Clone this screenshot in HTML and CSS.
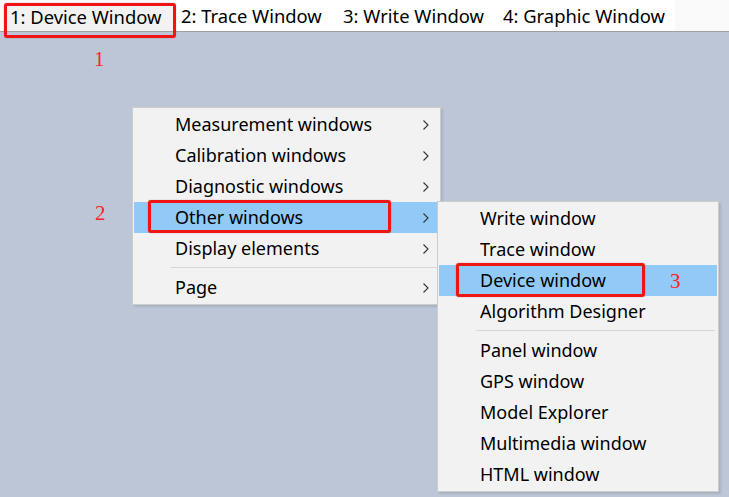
FILE: index.html
```html
<!DOCTYPE html>
<html>
<head>
<meta charset="utf-8">
<link rel="stylesheet" href="styles.css">
</head>
<body>
<div class="tabbar">
  <div class="tab t1 active">1: Device Window</div>
  <div class="tab t2">2: Trace Window</div>
  <div class="tab t3">3: Write Window</div>
  <div class="tab t4">4: Graphic Window</div>
</div>
<div class="desk">
  <div class="mark mark-tab"></div>
  <div class="num num1">1</div>

  <div class="menu menu-main">
    <div class="item">Measurement windows<span class="arrow"><svg width="6" height="10" viewBox="0 0 6 10"><polyline points="0.5,0.5 5,5 0.5,9.5" fill="none" stroke="#333" stroke-width="1.1"/></svg></span></div>
    <div class="item">Calibration windows<span class="arrow"><svg width="6" height="10" viewBox="0 0 6 10"><polyline points="0.5,0.5 5,5 0.5,9.5" fill="none" stroke="#333" stroke-width="1.1"/></svg></span></div>
    <div class="item">Diagnostic windows<span class="arrow"><svg width="6" height="10" viewBox="0 0 6 10"><polyline points="0.5,0.5 5,5 0.5,9.5" fill="none" stroke="#333" stroke-width="1.1"/></svg></span></div>
    <div class="item hl">Other windows<span class="arrow"><svg width="6" height="10" viewBox="0 0 6 10"><polyline points="0.5,0.5 5,5 0.5,9.5" fill="none" stroke="#333" stroke-width="1.1"/></svg></span></div>
    <div class="item">Display elements<span class="arrow"><svg width="6" height="10" viewBox="0 0 6 10"><polyline points="0.5,0.5 5,5 0.5,9.5" fill="none" stroke="#333" stroke-width="1.1"/></svg></span></div>
    <div class="sep"></div>
    <div class="item">Page<span class="arrow"><svg width="6" height="10" viewBox="0 0 6 10"><polyline points="0.5,0.5 5,5 0.5,9.5" fill="none" stroke="#333" stroke-width="1.1"/></svg></span></div>
  </div>
  <div class="mark mark-other"></div>
  <div class="num num2">2</div>

  <div class="menu menu-sub">
    <div class="item">Write window</div>
    <div class="item">Trace window</div>
    <div class="item hl">Device window</div>
    <div class="item">Algorithm Designer</div>
    <div class="sep"></div>
    <div class="item">Panel window</div>
    <div class="item">GPS window</div>
    <div class="item">Model Explorer</div>
    <div class="item">Multimedia window</div>
    <div class="item">HTML window</div>
  </div>
  <div class="mark mark-device"></div>
  <div class="num num3">3</div>
</div>
</body>
</html>
```

FILE: styles.css
```css
html, body {
  margin: 0;
  padding: 0;
}
body {
  width: 729px;
  height: 497px;
  background: #bcc6d6;
  font-family: "Noto Sans", "Open Sans", sans-serif;
  color: #000;
  overflow: hidden;
}
.tabbar {
  display: flex;
  height: 32px;
  background: #f9f9f9;
  border-bottom: 1px solid #a0a0a0;
  box-sizing: border-box;
  padding-left: 4px;
}
.tab {
  background: #fff;
  height: 31px;
  box-sizing: border-box;
  padding: 2px 0 0 6px;
  font-size: 18.4px;
  line-height: 27px;
  white-space: nowrap;
  overflow: hidden;
  flex: none;
}
.t1 { width: 172px; }
.t2 { width: 160px; padding-left: 5px; }
.t3 { width: 161px; padding-left: 7px; }
.t4 { width: 178px; padding-left: 6px; }
.tab.active {
  background: #f2f2f2;
  margin-top: 3px;
  height: 28px;
  padding-top: 0;
  line-height: 27px;
}
.desk {
  position: relative;
  height: 465px;
}
.menu {
  position: absolute;
  background: #f2f2f2;
  border: 1px solid #cccccc;
  padding: 1px;
  box-sizing: border-box;
  font-size: 18px;
  box-shadow: 2px 2px 2px rgba(0,0,0,0.1);
}
.menu-main {
  left: 132px;
  top: 75px;
  width: 309px;
  height: 198px;
}
.menu-sub {
  left: 437px;
  top: 169px;
  width: 282px;
  height: 291px;
}
.item {
  position: relative;
  height: 31px;
  line-height: 30px;
  padding-left: 41px;
  white-space: nowrap;
}
.item.hl {
  background: #91c9f7;
}
.arrow {
  position: absolute;
  right: 10px;
  top: 11px;
  height: 10px;
  line-height: 0;
}
.sep {
  height: 8px;
  margin-left: 37px;
  margin-right: 2px;
  position: relative;
}
.sep::after {
  content: "";
  position: absolute;
  left: 0;
  right: 0;
  top: 3px;
  border-top: 1px solid #d7d7d7;
}
.mark {
  position: absolute;
  border: 3px solid #f01414;
  border-radius: 3px;
  box-sizing: border-box;
  box-shadow: 0 0 1px rgba(120,0,0,0.6);
}
.mark-tab {
  left: 4px;
  top: -29px;
  width: 172px;
  height: 35px;
}
.mark-other {
  left: 148px;
  top: 168px;
  width: 243px;
  height: 33px;
}
.mark-device {
  left: 456px;
  top: 231px;
  width: 189px;
  height: 34px;
}
.num {
  position: absolute;
  font-family: "Liberation Serif", "DejaVu Serif", serif;
  font-size: 21px;
  line-height: 1;
  color: #ff2020;
}
.num1 { left: 94px; top: 17px; }
.num2 { left: 95px; top: 171px; }
.num3 { left: 670px; top: 239px; }
```
